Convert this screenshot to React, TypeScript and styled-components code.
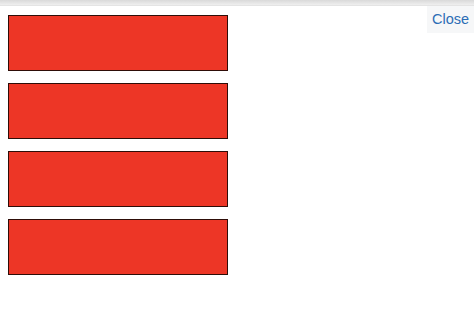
import React from "react";
import styled, { createGlobalStyle } from "styled-components";

const Global = createGlobalStyle`
  html, body { margin: 0; padding: 0; background: #ffffff; }
  body { font-family: "Liberation Sans", Arial, sans-serif; }
`;

const Page = styled.div`
  position: relative;
  width: 474px;
  height: 325px;
  background: #ffffff;
`;

const TopBar = styled.div`
  height: 6px;
  background: linear-gradient(to bottom, #d9d9d9, #efefef);
  border-bottom: 1px solid #e4e4e4;
  box-sizing: border-box;
`;

const List = styled.div`
  display: flex;
  flex-direction: column;
  gap: 12px;
  padding: 9px 0 0 8px;
`;

const Box = styled.div`
  width: 220px;
  height: 56px;
  box-sizing: border-box;
  background: #ed3626;
  border: 1.5px solid #2e0d08;
`;

const CloseButton = styled.button`
  position: absolute;
  top: 6px;
  right: 0;
  width: 47px;
  height: 27px;
  padding: 0 0 2px 0;
  border: none;
  background: #f6f7f8;
  color: #2c6db5;
  font-family: "Liberation Sans", Arial, sans-serif;
  font-size: 14.5px;
  cursor: pointer;
`;

export default function App() {
  return (
    <>
      <Global />
      <Page>
        <TopBar />
        <List>
          {[0, 1, 2, 3].map((i) => (
            <Box key={i} />
          ))}
        </List>
        <CloseButton>Close</CloseButton>
      </Page>
    </>
  );
}
